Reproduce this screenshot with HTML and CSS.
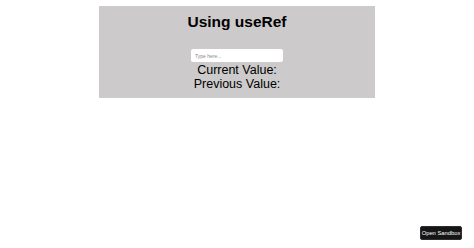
FILE: index.html
```html
<!DOCTYPE html>
<html>
<head>
<meta charset="utf-8">
<link rel="stylesheet" href="styles.css">
</head>
<body>
<div class="box">
  <h1 class="title">Using useRef</h1>
  <div class="field"><input class="input" type="text" placeholder="Type here..."></div>
  <div class="value">Current Value:</div>
  <div class="value">Previous Value:</div>
</div>
<a class="sandbox">Open Sandbox</a>
</body>
</html>
```
FILE: styles.css
```css
html, body {
  margin: 0;
  padding: 0;
  background: #fff;
  font-family: "Liberation Sans", Arial, Helvetica, sans-serif;
}
.box {
  width: 276px;
  margin: 6px auto 0;
  background: #cccaca;
  padding: 6px 0 7px;
  text-align: center;
  color: #000;
}
.title {
  margin: 0;
  font-size: 15.5px;
  line-height: 20px;
  font-weight: bold;
}
.field {
  margin-top: 17px;
  height: 13px;
  margin-bottom: 1px;
  display: flex;
  justify-content: center;
}
.input {
  box-sizing: border-box;
  width: 92px;
  height: 13px;
  border: none;
  border-radius: 2px;
  background: #fff;
  padding: 0 0 0 4px;
  margin: 0;
  font-family: "Liberation Sans", Arial, sans-serif;
  font-size: 5px;
  outline: none;
}
.input::placeholder {
  color: #8a8a8a;
}
.value {
  font-size: 12.5px;
  line-height: 14px;
}
.sandbox {
  position: fixed;
  right: 12px;
  bottom: 8px;
  box-sizing: border-box;
  width: 42px;
  height: 14px;
  background: #151515;
  border: 1px solid #2e2e2e;
  border-radius: 2px;
  color: #fff;
  font-size: 5.8px;
  white-space: nowrap;
  display: flex;
  align-items: center;
  justify-content: center;
  font-family: "Liberation Sans", Arial, sans-serif;
}
```
